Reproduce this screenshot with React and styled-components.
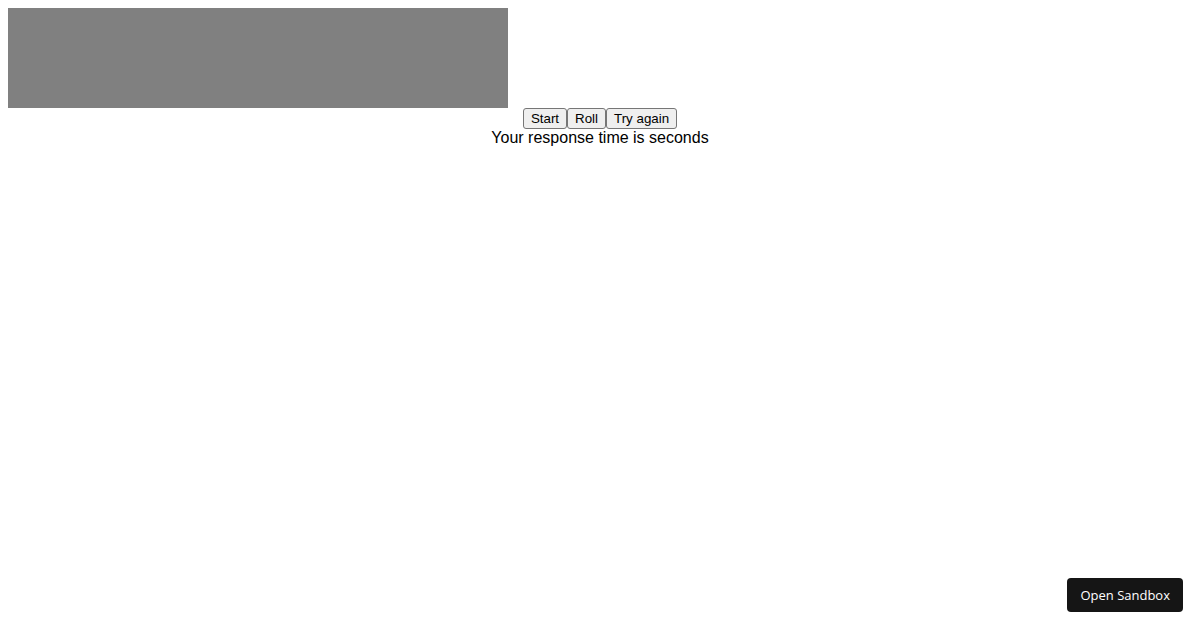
import React, { useState } from 'react';
import styled, { createGlobalStyle } from 'styled-components';

const GlobalStyle = createGlobalStyle`
  body {
    margin: 8px;
    font-family: "Liberation Sans", Arial, sans-serif;
    background: #fff;
  }
`;

const Board = styled.div`
  width: 500px;
  height: 100px;
  background-color: ${(p) => p.color};
`;

const Controls = styled.div`
  display: flex;
  justify-content: center;
`;

const Button = styled.button`
  font: 13.33px "Liberation Sans", Arial, sans-serif;
  height: 21px;
  padding: 1px 7px;
  margin: 0;
  color: #000;
  background-color: #efefef;
  border: 1px solid #767676;
  border-radius: 3px;
`;

const Result = styled.div`
  text-align: center;
  font-size: 16px;
  line-height: 18px;
`;

const SandboxLink = styled.a`
  position: fixed;
  right: 17px;
  bottom: 18px;
  height: 34px;
  padding: 0 13px 0 13.5px;
  display: flex;
  align-items: center;
  background-color: #151515;
  color: #fff;
  border-radius: 4px;
  font-family: "Open Sans", sans-serif;
  font-size: 13px;
  font-weight: 500;
  text-decoration: none;
`;

function App() {
  const [color] = useState('#808080');
  const [time] = useState('');

  return (
    <>
      <GlobalStyle />
      <Board color={color} />
      <Controls>
        <Button>Start</Button>
        <Button>Roll</Button>
        <Button>Try again</Button>
      </Controls>
      <Result>
        Your response time is
        {time}
        {' '}
        seconds
      </Result>
      <SandboxLink href="#">Open Sandbox</SandboxLink>
    </>
  );
}

export default App;
